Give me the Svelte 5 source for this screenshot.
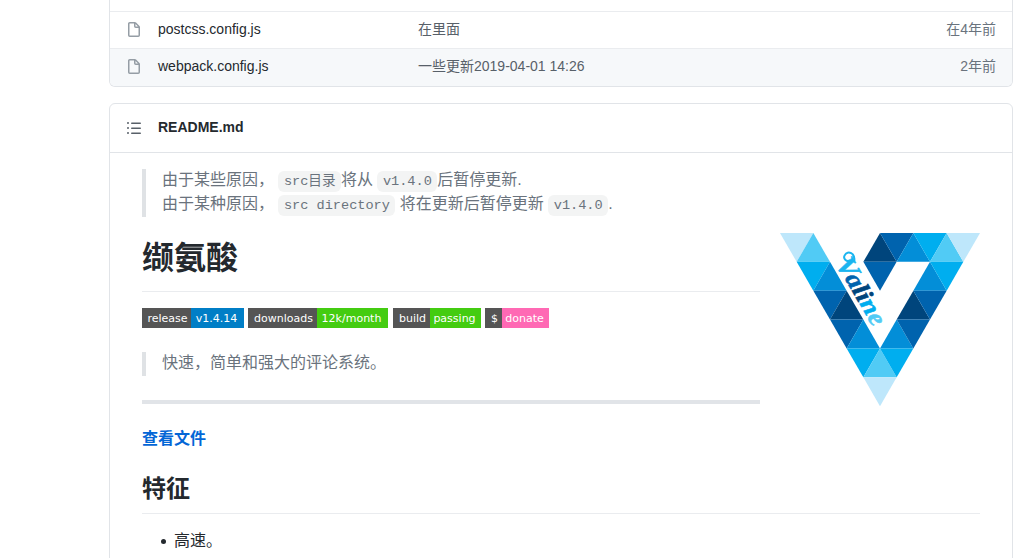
<script lang="ts">
	const files = [
		{ name: 'postcss.config.js', message: '在里面', age: '在4年前' },
		{ name: 'webpack.config.js', message: '一些更新2019-04-01 14:26', age: '2年前' }
	];

	const badges = [
		{ label: 'release', value: 'v1.4.14', color: '#007ec6', left: 49, right: 53, gap: 4 },
		{ label: 'downloads', value: '12k/month', color: '#4c1', left: 69, right: 71, gap: 5 },
		{ label: 'build', value: 'passing', color: '#4c1', left: 37, right: 51, gap: 4 },
		{ label: '$', value: 'donate', color: '#ff69b4', left: 17, right: 47, gap: 0 }
	];

	const shades = ['#bee7fb', '#51cbf5', '#00aeef', '#038ed8', '#0063ae', '#00457c'];

	// column (half a side), row, points up, shade
	const tiles: [number, number, boolean, number][] = [
		[0, 0, false, 0], [1, 0, true, 1],
		[5, 0, true, 5], [6, 0, false, 4], [7, 0, true, 3], [8, 0, false, 2], [9, 0, true, 1], [10, 0, false, 0],
		[1, 1, false, 2], [2, 1, true, 3], [5, 1, false, 4], [8, 1, true, 3], [9, 1, false, 2],
		[2, 2, false, 4], [3, 2, true, 5], [7, 2, true, 5], [8, 2, false, 4],
		[3, 3, false, 4], [4, 3, true, 3], [6, 3, true, 3], [7, 3, false, 4],
		[4, 4, false, 2], [5, 4, true, 1], [6, 4, false, 2],
		[5, 5, false, 0]
	];

	function points(col: number, row: number, up: boolean) {
		const w = 200 / 12;
		const h = 173.2 / 6;
		const base = (up ? row + 1 : row) * h;
		const tip = (up ? row : row + 1) * h;
		return `${col * w},${base} ${(col + 2) * w},${base} ${(col + 1) * w},${tip}`;
	}
</script>

<div class="page">
	<div class="box files">
		<div class="row previous"></div>
		{#each files as file}
			<div class="row">
				<svg class="icon" viewBox="0 0 16 16" width="16" height="16">
					<path fill-rule="evenodd" d="M3.75 1.5a.25.25 0 00-.25.25v11.5c0 .138.112.25.25.25h8.5a.25.25 0 00.25-.25V6H9.75A1.75 1.75 0 018 4.25V1.5H3.75zm5.75.56v2.19c0 .138.112.25.25.25h2.19L9.5 2.06zM2 1.75C2 .784 2.784 0 3.75 0h5.086c.464 0 .909.184 1.237.513l3.414 3.414c.329.328.513.773.513 1.237v8.086A1.75 1.75 0 0112.25 15h-8.5A1.75 1.75 0 012 13.25V1.75z" />
				</svg>
				<span class="name">{file.name}</span>
				<span class="message">{file.message}</span>
				<span class="age">{file.age}</span>
			</div>
		{/each}
	</div>

	<div class="box readme">
		<div class="header">
			<svg class="icon" viewBox="0 0 16 16" width="16" height="16">
				<path fill-rule="evenodd" d="M2 4a1 1 0 100-2 1 1 0 000 2zm3.75-1.5a.75.75 0 000 1.5h8.5a.75.75 0 000-1.5h-8.5zm0 5a.75.75 0 000 1.5h8.5a.75.75 0 000-1.5h-8.5zm0 5a.75.75 0 000 1.5h8.5a.75.75 0 000-1.5h-8.5zM3 8a1 1 0 11-2 0 1 1 0 012 0zm-1 6a1 1 0 100-2 1 1 0 000 2z" />
			</svg>
			<span class="title">README.md</span>
		</div>
		<article>
			<blockquote>
				<div>由于某些原因， <code>src目录</code>将从 <code>v1.4.0</code>后暂停更新.</div>
				<div>由于某种原因， <code>src directory</code> 将在更新后暂停更新 <code>v1.4.0</code>.</div>
			</blockquote>
			<div class="intro">
				<div class="summary">
					<h1>缬氨酸</h1>
					<div class="badges">
						{#each badges as badge}
							<span class="badge" style:margin-right={`${badge.gap}px`}>
								<span class="label" style:width={`${badge.left}px`}>{badge.label}</span>
								<span class="value" style:width={`${badge.right}px`} style:background-color={badge.color}>{badge.value}</span>
							</span>
						{/each}
					</div>
					<blockquote><div>快速，简单和强大的评论系统。</div></blockquote>
					<hr />
					<a href="#docs">查看文件</a>
				</div>
				<svg class="logo" viewBox="0 0 200 174" width="200" height="174">
					{#each tiles as [col, row, up, shade]}
						<polygon points={points(col, row, up)} fill={shades[shade]} />
					{/each}
					<g class="wordmark" transform="translate(58 34) rotate(60)">
						<text class="initial" x="-4" y="1">V</text>
						<path class="curl" d="M3 -17C-3 -22 -10 -17 -7 -12C-5 -8 1 -10 0 -14" />
						<text x="13" y="0" textLength="57" lengthAdjust="spacingAndGlyphs"><tspan class="blue">a</tspan><tspan class="navy">l</tspan><tspan class="navy">i</tspan><tspan class="cyan">n</tspan><tspan class="sky">e</tspan></text>
					</g>
				</svg>
			</div>
			<h2>特征</h2>
			<ul>
				<li>高速。</li>
			</ul>
		</article>
	</div>
</div>

<style>
	:global(body) {
		overflow: hidden;
		background-color: white;
	}

	.page {
		box-sizing: border-box;
		width: 1027px;
		height: 558px;
		padding: 0 14px 0 109px;
		overflow: hidden;
		font-family: 'Liberation Sans', 'Noto Sans CJK SC', sans-serif;
		font-size: 14px;
		line-height: 21px;
		color: #24292e;
	}

	.box {
		box-sizing: border-box;
		border: 1px solid #e1e4e8;
		border-radius: 6px;
	}

	.files {
		height: 87px;
		border-top: none;
		border-top-left-radius: 0;
		border-top-right-radius: 0;
		overflow: hidden;
	}

	.row {
		box-sizing: border-box;
		height: 37px;
		padding: 0 16px;
		display: grid;
		grid-template-columns: 32px 260px 1fr auto;
		align-items: center;
		border-top: 1px solid #eaecef;
	}

	.row.previous {
		height: 11px;
		border-top: none;
	}

	.row:last-child {
		height: 38px;
		padding-bottom: 1px;
		background-color: #f6f8fa;
	}

	.row span {
		padding-bottom: 2px;
	}

	.icon {
		display: block;
		fill: #959da5;
	}

	.message,
	.age {
		color: #586069;
	}

	.age {
		color: #6a737d;
	}

	.readme {
		height: 480px;
		margin-top: 16px;
	}

	.header {
		display: flex;
		align-items: center;
		gap: 16px;
		height: 48px;
		padding: 0 16px;
		border-bottom: 1px solid #e1e4e8;
	}

	.header .icon {
		fill: #586069;
	}

	.title {
		font-weight: bold;
		padding-bottom: 2px;
	}

	article {
		padding: 16px 32px;
		font-size: 16px;
		line-height: 24px;
	}

	blockquote {
		margin: 0;
		padding: 0 16px;
		border-left: 4px solid #dfe2e5;
		color: #6a737d;
	}

	blockquote div {
		height: 24px;
		line-height: 22px;
		white-space: nowrap;
	}

	code {
		padding: 3.2px 5.44px;
		border-radius: 6px;
		background-color: #f3f4f4;
		font-family: 'Liberation Mono', 'Noto Sans CJK SC', monospace;
		font-size: 13.6px;
		line-height: 16px;
	}

	.intro {
		display: flex;
		justify-content: space-between;
		padding-top: 16px;
	}

	.summary {
		width: 618px;
	}

	h1,
	h2 {
		margin: 0;
		border-bottom: 1px solid #eaecef;
		font-weight: bold;
	}

	h1 {
		height: 50px;
		margin-top: 8px;
		font-size: 32px;
		line-height: 34px;
	}

	.badges {
		display: flex;
		margin: 16px 0 24px;
	}

	.badge {
		display: flex;
		height: 20px;
		font-family: 'DejaVu Sans', sans-serif;
		font-size: 11px;
		line-height: 21px;
		color: white;
		text-align: center;
		white-space: nowrap;
	}

	.label {
		padding-left: 2px;
		box-sizing: border-box;
		background-color: #555;
	}

	.value {
		box-sizing: border-box;
		padding-right: 2px;
	}

	hr {
		height: 4px;
		margin: 24px 0;
		border: none;
		background-color: #e1e4e8;
	}

	a {
		display: block;
		height: 24px;
		line-height: 22px;
		font-weight: bold;
		color: #0366d6;
		text-decoration: none;
	}

	.logo {
		display: block;
	}

	.wordmark {
		font-family: 'Liberation Serif', serif;
		font-size: 25px;
		font-style: italic;
		font-weight: bold;
		stroke-width: 0.6;
	}

	.initial {
		font-size: 28px;
		fill: #1bb5f0;
		stroke: #1bb5f0;
	}

	.curl {
		fill: none;
		stroke: #1bb5f0;
		stroke-width: 2;
	}

	.navy {
		fill: #00457c;
		stroke: #00457c;
	}

	.blue {
		fill: #0063ae;
		stroke: #0063ae;
	}

	.cyan {
		fill: #00aeef;
		stroke: #00aeef;
	}

	.sky {
		fill: #51cbf5;
		stroke: #51cbf5;
	}

	h2 {
		height: 37px;
		margin-top: 24px;
		font-size: 24px;
		line-height: 26px;
	}

	ul {
		margin: 16px 0 0;
		padding-left: 19px;
		line-height: 22px;
		list-style: none;
	}

	li {
		display: flex;
		align-items: center;
		gap: 8px;
	}

	li::before {
		content: '';
		width: 5px;
		height: 5px;
		margin-top: 1px;
		border-radius: 50%;
		background-color: #24292e;
	}
</style>
